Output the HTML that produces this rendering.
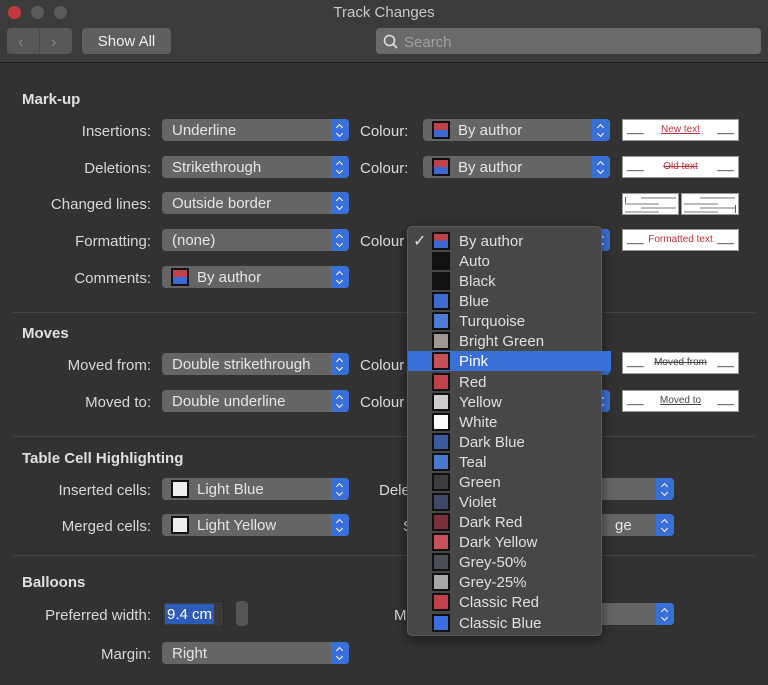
<!DOCTYPE html>
<html><head><meta charset="utf-8"><style>
*{margin:0;padding:0;box-sizing:border-box}
body{width:768px;height:685px;background:#323232;font-family:"Liberation Sans",sans-serif;color:#dcdcdc;position:relative;overflow:hidden;font-size:15px}
.a{position:absolute;white-space:nowrap}
.t{padding-top:2px}
.tb{position:absolute;left:0;top:0;width:768px;height:63px;background:#3b3b3b;border-bottom:1px solid #1a1a1a}
.dot{position:absolute;top:6px;width:13px;height:13px;border-radius:50%;background:#5a5a5a}
.btn{position:absolute;background:#5f5f5f;border-radius:4px;height:26px}
.h{position:absolute;left:22px;font-weight:bold;font-size:15px;color:#e0e0e0;padding-top:2px}
.lbl{position:absolute;width:151px;left:0;text-align:right;font-size:15px;color:#d8d8d8;padding-top:2px}
.pop{position:absolute;height:22px;background:#656565;border-radius:4px;font-size:15px;color:#e6e6e6;line-height:24px;padding-left:10px}
.pop .st{position:absolute;right:0;top:0;width:18px;height:22px;background:#3b6fd8;border-radius:0 4px 4px 0}
.st:before{content:"";position:absolute;left:6px;top:6px;width:4px;height:4px;border-left:1.3px solid #fff;border-top:1.3px solid #fff;transform:rotate(45deg)}
.st:after{content:"";position:absolute;left:6px;top:12px;width:4px;height:4px;border-right:1.3px solid #fff;border-bottom:1.3px solid #fff;transform:rotate(45deg)}
.sw{position:absolute;width:18px;height:18px;background:#111;padding:2px}
.sw i{display:block;width:14px;height:14px}
.prev{position:absolute;left:622px;width:117px;height:22px;background:#fff;border:1px solid #999;font-size:10px;color:#b8333a;text-align:center;line-height:20px}
.sep{position:absolute;left:12px;width:743px;height:1px;background:#444}
.menu{position:absolute;left:407px;top:226px;width:195px;height:410px;background:#474747;border:1px solid #5a5a5a;border-radius:5px;box-shadow:0 4px 12px rgba(0,0,0,.5)}
.mi{position:absolute;left:0;width:194px;height:20px;line-height:21px;padding-left:51px;font-size:15px;color:#e0e0e0}
.mi .sw{left:24px;top:1px}
</style></head><body>
<div class="tb">
<div class="dot" style="left:8px;background:#c7363f"></div>
<div class="dot" style="left:31px"></div>
<div class="dot" style="left:54px"></div>
<div class="a" style="left:0;width:768px;text-align:center;top:4px;font-size:15px;color:#c8c8c8">Track Changes</div>
<div class="btn" style="left:7px;top:28px;width:65px;background:#585858"></div>
<div class="a" style="left:39px;top:28px;width:1px;height:26px;background:#4a4a4a"></div>
<div class="a" style="left:18px;top:34px;color:#888;font-size:16px">&#x2039;</div>
<div class="a" style="left:51px;top:34px;color:#888;font-size:16px">&#x203A;</div>
<div class="btn" style="left:82px;top:28px;width:89px;text-align:center;line-height:27px;color:#eee;font-size:15px">Show All</div>
<div class="btn" style="left:376px;top:28px;width:385px;background:#6a6a6a"></div>
<svg class="a" style="left:383px;top:34px" width="16" height="16"><circle cx="6.5" cy="6.5" r="5" fill="none" stroke="#ddd" stroke-width="1.6"/><line x1="10" y1="10" x2="14" y2="14" stroke="#ddd" stroke-width="1.8"/></svg>
<div class="a" style="left:404px;top:34px;color:#a0a0a0;font-size:15px">Search</div>
</div>

<div class="h" style="top:89px">Mark-up</div>
<div class="lbl" style="top:121px">Insertions:</div>
<div class="pop" style="left:162px;top:119px;width:187px">Underline<div class="st"></div></div>
<div class="a t" style="left:360px;top:121px">Colour:</div>
<div class="pop" style="left:423px;top:119px;width:187px;padding-left:35px"><div class="sw" style="left:9px;top:2px"><i style="background:linear-gradient(#c0414a 50%,#3a68d4 50%)"></i></div>By author<div class="st"></div></div>
<div class="prev" style="top:119px"><span style="position:absolute;left:4px;top:0;color:#000">___</span><u>New text</u><span style="position:absolute;right:4px;top:0;color:#000">___</span></div>

<div class="lbl" style="top:158px">Deletions:</div>
<div class="pop" style="left:162px;top:156px;width:187px">Strikethrough<div class="st"></div></div>
<div class="a t" style="left:360px;top:158px">Colour:</div>
<div class="pop" style="left:423px;top:156px;width:187px;padding-left:35px"><div class="sw" style="left:9px;top:2px"><i style="background:linear-gradient(#c0414a 50%,#3a68d4 50%)"></i></div>By author<div class="st"></div></div>
<div class="prev" style="top:156px"><span style="position:absolute;left:4px;top:0;color:#000">___</span><s>Old text</s><span style="position:absolute;right:4px;top:0;color:#000">___</span></div>

<div class="lbl" style="top:194px">Changed lines:</div>
<div class="pop" style="left:162px;top:192px;width:187px">Outside border<div class="st"></div></div>
<div class="a" style="left:622px;top:193px;width:57px;height:22px;background:#fff;border:1px solid #999"><div class="a" style="left:2px;top:3px;width:1px;height:7px;background:#b8333a"></div><div class="a" style="left:18px;top:3px;width:35px;height:2px;background:#bbb"></div><div class="a" style="left:2px;top:9px;width:34px;height:2px;background:#bbb"></div><div class="a" style="left:18px;top:13px;width:35px;height:2px;background:#bbb"></div><div class="a" style="left:2px;top:17px;width:34px;height:2px;background:#bbb"></div></div>
<div class="a" style="left:681px;top:193px;width:58px;height:22px;background:#fff;border:1px solid #999"><div class="a" style="right:2px;top:11px;width:1px;height:8px;background:#b8333a"></div><div class="a" style="left:18px;top:3px;width:35px;height:2px;background:#bbb"></div><div class="a" style="left:2px;top:9px;width:34px;height:2px;background:#bbb"></div><div class="a" style="left:18px;top:13px;width:35px;height:2px;background:#bbb"></div><div class="a" style="left:2px;top:17px;width:34px;height:2px;background:#bbb"></div></div>

<div class="lbl" style="top:231px">Formatting:</div>
<div class="pop" style="left:162px;top:229px;width:187px">(none)<div class="st"></div></div>
<div class="a t" style="left:360px;top:231px">Colour</div>
<div class="pop" style="left:423px;top:229px;width:187px"><div class="st"></div></div>
<div class="prev" style="top:229px"><span style="position:absolute;left:4px;top:0;color:#000">___</span>Formatted text<span style="position:absolute;right:4px;top:0;color:#000">___</span></div>

<div class="lbl" style="top:268px">Comments:</div>
<div class="pop" style="left:162px;top:266px;width:187px;padding-left:35px"><div class="sw" style="left:9px;top:2px"><i style="background:linear-gradient(#c0414a 50%,#3a68d4 50%)"></i></div>By author<div class="st"></div></div>

<div class="sep" style="top:312px"></div>
<div class="h" style="top:323px">Moves</div>
<div class="lbl" style="top:355px">Moved from:</div>
<div class="pop" style="left:162px;top:353px;width:187px">Double strikethrough<div class="st"></div></div>
<div class="a t" style="left:360px;top:355px">Colour</div>
<div class="pop" style="left:423px;top:353px;width:187px"><div class="st"></div></div>
<div class="prev" style="top:352px;color:#444"><span style="position:absolute;left:4px;top:0;color:#000">___</span><s>Moved from</s><span style="position:absolute;right:4px;top:0;color:#000">___</span></div>
<div class="lbl" style="top:392px">Moved to:</div>
<div class="pop" style="left:162px;top:390px;width:187px">Double underline<div class="st"></div></div>
<div class="a t" style="left:360px;top:392px">Colour</div>
<div class="pop" style="left:423px;top:390px;width:187px"><div class="st"></div></div>
<div class="prev" style="top:390px;color:#444"><span style="position:absolute;left:4px;top:0;color:#000">___</span><u>Moved to</u><span style="position:absolute;right:4px;top:0;color:#000">___</span></div>

<div class="sep" style="top:436px"></div>
<div class="h" style="top:448px">Table Cell Highlighting</div>
<div class="lbl" style="top:480px">Inserted cells:</div>
<div class="pop" style="left:162px;top:478px;width:187px;padding-left:35px"><div class="sw" style="left:9px;top:2px"><i style="background:#eee"></i></div>Light Blue<div class="st"></div></div>
<div class="a t" style="left:379px;top:480px">Dele</div>
<div class="pop" style="left:430px;top:478px;width:244px"><div class="st"></div></div>
<div class="lbl" style="top:516px">Merged cells:</div>
<div class="pop" style="left:162px;top:514px;width:187px;padding-left:35px"><div class="sw" style="left:9px;top:2px"><i style="background:#eee"></i></div>Light Yellow<div class="st"></div></div>
<div class="a t" style="left:403px;top:516px">S</div>
<div class="pop" style="left:430px;top:514px;width:244px;padding-left:185px">ge<div class="st"></div></div>

<div class="sep" style="top:555px"></div>
<div class="h" style="top:572px">Balloons</div>
<div class="lbl" style="top:605px">Preferred width:</div>
<div class="a" style="left:162px;top:601px;width:62px;height:26px;background:#3a3a3a;border:1px solid #2a2a2a"></div>
<div class="a" style="left:165px;top:604px;height:20px;padding:0 2px;background:#2f5bb8;color:#fff;line-height:21px">9.4 cm</div>
<div class="a" style="left:236px;top:601px;width:12px;height:25px;background:#555;border-radius:4px"></div>
<div class="a t" style="left:394px;top:605px">M</div>
<div class="pop" style="left:430px;top:603px;width:244px"><div class="st"></div></div>
<div class="lbl" style="top:644px">Margin:</div>
<div class="pop" style="left:162px;top:642px;width:187px">Right<div class="st"></div></div>

<div class="menu">
<div class="mi" style="top:4px"><span class="a" style="left:5px;top:0;font-size:16px">&#x2713;</span><div class="sw"><i style="background:linear-gradient(#c0414a 45%,#3a68d4 45%)"></i></div>By author</div>
<div class="mi" style="top:24px"><div class="sw"><i style="background:#111"></i></div>Auto</div>
<div class="mi" style="top:44px"><div class="sw"><i style="background:#111"></i></div>Black</div>
<div class="mi" style="top:64px"><div class="sw"><i style="background:#3d6ad0"></i></div>Blue</div>
<div class="mi" style="top:84px"><div class="sw"><i style="background:#4d7ad8"></i></div>Turquoise</div>
<div class="mi" style="top:104px"><div class="sw"><i style="background:#a09890"></i></div>Bright Green</div>
<div class="mi" style="top:124px;background:#3b6fd8;color:#fff;width:203px"><div class="sw"><i style="background:#c65058"></i></div>Pink</div>
<div class="mi" style="top:145px"><div class="sw"><i style="background:#c0414a"></i></div>Red</div>
<div class="mi" style="top:165px"><div class="sw"><i style="background:#ccc"></i></div>Yellow</div>
<div class="mi" style="top:185px"><div class="sw"><i style="background:#fff"></i></div>White</div>
<div class="mi" style="top:205px"><div class="sw"><i style="background:#3a5aa0"></i></div>Dark Blue</div>
<div class="mi" style="top:225px"><div class="sw"><i style="background:#4a78d0"></i></div>Teal</div>
<div class="mi" style="top:245px"><div class="sw"><i style="background:#3c3c3c"></i></div>Green</div>
<div class="mi" style="top:265px"><div class="sw"><i style="background:#40486a"></i></div>Violet</div>
<div class="mi" style="top:285px"><div class="sw"><i style="background:#7a3038"></i></div>Dark Red</div>
<div class="mi" style="top:305px"><div class="sw"><i style="background:#c85058"></i></div>Dark Yellow</div>
<div class="mi" style="top:325px"><div class="sw"><i style="background:#4a4e58"></i></div>Grey-50%</div>
<div class="mi" style="top:345px"><div class="sw"><i style="background:#a8a8a8"></i></div>Grey-25%</div>
<div class="mi" style="top:365px"><div class="sw"><i style="background:#c0414a"></i></div>Classic Red</div>
<div class="mi" style="top:386px"><div class="sw"><i style="background:#3a6ee0"></i></div>Classic Blue</div>
</div>
</body></html>
